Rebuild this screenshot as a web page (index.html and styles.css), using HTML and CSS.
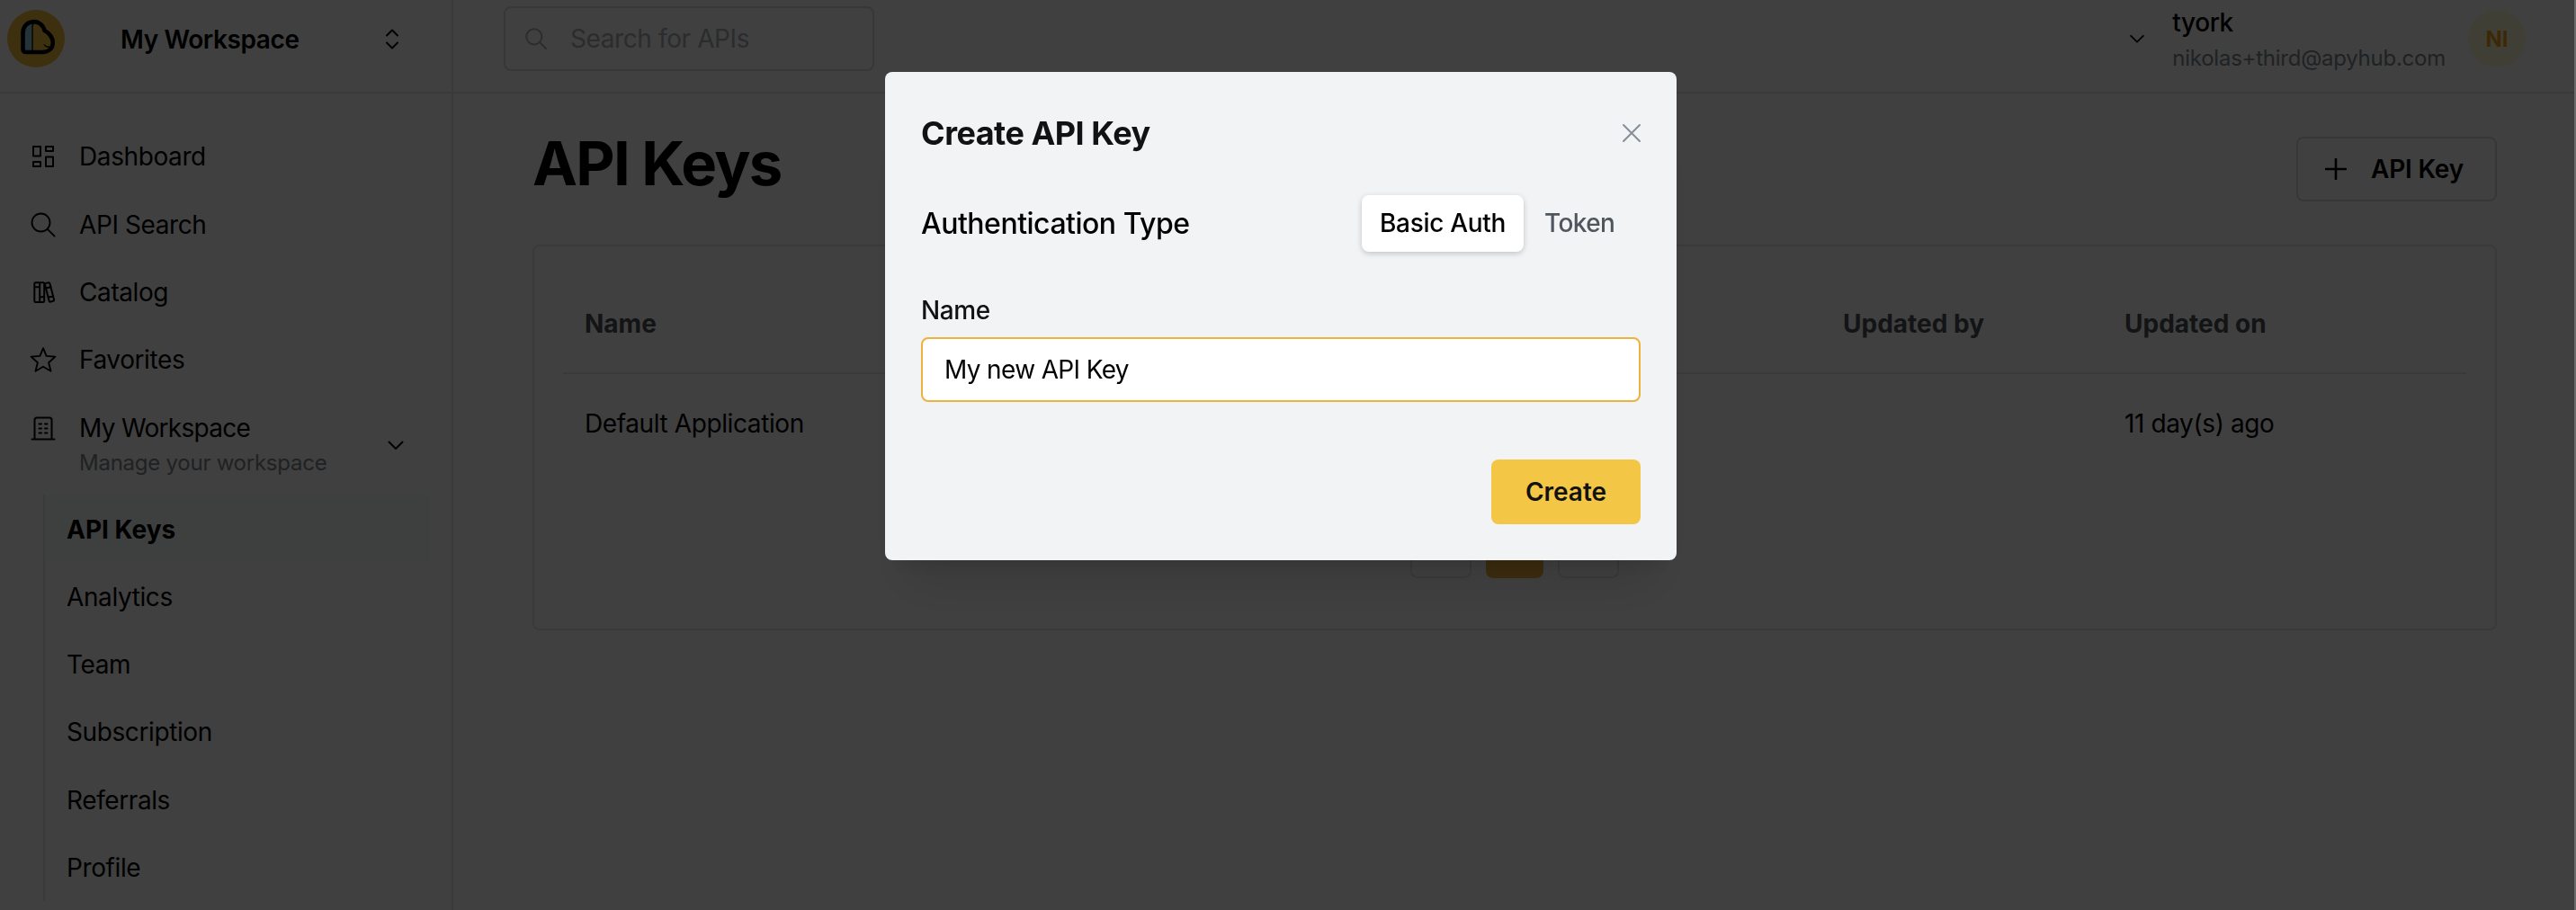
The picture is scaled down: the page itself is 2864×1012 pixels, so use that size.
FILE: index.html
```html
<!DOCTYPE html>
<html lang="en">

<head>
    <meta charset="UTF-8">
    <meta name="viewport" content="width=device-width, initial-scale=1.0">
    <title>API Keys</title>
    <link rel="stylesheet" href="styles.css">
</head>

<body>
    <div class="app">
        <aside class="sidebar">
            <div class="brand">
                <svg class="logo" viewBox="0 0 64 64">
                    <circle cx="32" cy="32" r="32" fill="#f0bf3c" />
                    <path d="M19 16.500 Q22 13.500 28 13.500 V46.500 H19 Z" fill="#8bc9e0" />
                    <path d="M17.500 25.500 C17.500 10.500 38 8.500 41.500 23 C54 29 54.500 46.500 39 47 H21 Q17.500 47 17.500 43.500 Z" fill="none" stroke="#000" stroke-width="4.600" stroke-linejoin="round" />
                    <path d="M28 47 V18 Q28 15.500 31 14 M41 38.500 Q43 42 47 41" fill="none" stroke="#000" stroke-width="1.300" />
                </svg>
                <span class="brand-name">My Workspace</span>
                <svg class="icon selector" viewBox="0 0 24 32"><path d="m6 12.500 6-6 6 6M6 20.500l6 6 6-6" /></svg>
            </div>
            <nav class="menu">
                <a class="menu-item">
                    <svg class="icon" viewBox="0 0 32 32"><path d="M5 5h8v10.500H5zM19 5h8v5h-8zM19 16.500h8V27h-8zM5 22h8v5H5z" /></svg>
                    <span>Dashboard</span>
                </a>
                <a class="menu-item">
                    <svg class="icon thin" viewBox="0 0 32 32"><circle cx="13.500" cy="13.500" r="10" /><path d="m20.600 20.600 8 8" /></svg>
                    <span>API Search</span>
                </a>
                <a class="menu-item">
                    <svg class="icon" viewBox="0 0 32 32"><path d="M7.500 5.300h4.700v21.600H7.500q-1.200 0-1.200-1.200V6.500q0-1.200 1.200-1.200zM12.200 5.300H16q1.200 0 1.200 1.200v19.200q0 1.200-1.200 1.200h-3.800M6.300 10.300h5.900M12.200 21.300h5M17.800 6.400l4-1.100q1.200-.2 1.600 1l4.700 18q.2 1.200-.9 1.500l-3 .8q-1.300.3-1.600-.9zM19 11.500l5.700-1.500M21.300 21.800l5.800-1.500" /></svg>
                    <span>Catalog</span>
                </a>
                <a class="menu-item">
                    <svg class="icon thin" viewBox="0 0 32 32"><path d="m16 3.200 3.600 8.700 9.700.8-7.200 6.500 2.400 9.500-8.500-4.900-8.500 4.900 2.400-9.500-7.200-6.500 9.700-.8z" /></svg>
                    <span>Favorites</span>
                </a>
                <a class="menu-item">
                    <svg class="icon" viewBox="0 0 32 32"><path d="M3.500 28.500h25M6.500 28.500V7q0-2.500 2.500-2.500h14q2.500 0 2.500 2.500v21.500M11.500 11.500h2.500M18 11.500h2.500M11.500 16.500h2.500M18 16.500h2.500M11.500 21.500h2.500M18 21.500h2.500" /></svg>
                    <span class="tight">My Workspace</span>
                </a>
            </nav>
            <div class="workspace-note">
                <span class="muted">Manage your workspace</span>
                <svg class="icon chevron" viewBox="0 0 24 24"><path d="m4.500 8.500 7.500 7.500 7.500-7.500" /></svg>
            </div>
            <nav class="submenu">
                <a class="submenu-item active">API Keys</a>
                <a class="submenu-item">Analytics</a>
                <a class="submenu-item">Team</a>
                <a class="submenu-item">Subscription</a>
                <a class="submenu-item">Referrals</a>
                <a class="submenu-item">Profile</a>
            </nav>
        </aside>

        <div class="page">
            <header class="topbar">
                <div class="search">
                    <svg class="icon" viewBox="0 0 24 24"><circle cx="9.800" cy="9.800" r="8.600" /><path d="m16 16 7 7" /></svg>
                    <span>Search for APIs</span>
                </div>
                <div class="user">
                    <svg class="icon user-chevron" viewBox="0 0 24 24"><path d="m4.500 8.500 7.500 7.500 7.500-7.500" /></svg>
                    <div class="user-info">
                        <span class="user-name">tyork</span>
                        <span class="muted">nikolas+third@apyhub.com</span>
                    </div>
                    <div class="avatar">NI</div>
                </div>
            </header>

            <main class="content">
                <div class="heading">
                    <h1>API Keys</h1>
                    <button class="btn-outline" type="button">
                        <svg class="icon" viewBox="0 0 24 24"><path d="M12 1v22M1 12h22" /></svg>
                        <span>API Key</span>
                    </button>
                </div>
                <section class="card">
                    <div class="row row-head">
                        <span>Name</span>
                        <span>Updated by</span>
                        <span class="col-on">Updated on</span>
                    </div>
                    <div class="row">
                        <span>Default Application</span>
                        <span class="col-on">11 day(s) ago</span>
                    </div>
                    <div class="pagination">
                        <div class="page-btn"></div>
                        <div class="page-btn current"></div>
                        <div class="page-btn"></div>
                    </div>
                </section>
            </main>
        </div>
    </div>

    <div class="overlay">
        <form class="modal">
            <div class="modal-head">
                <h2>Create API Key</h2>
                <svg class="icon close" viewBox="0 0 24 24"><path d="m3 3 18 18M21 3 3 21" /></svg>
            </div>
            <div class="auth">
                <span class="auth-label">Authentication Type</span>
                <div class="segmented">
                    <span class="segment selected">Basic Auth</span>
                    <span class="segment">Token</span>
                </div>
            </div>
            <label for="keyName">Name</label>
            <input type="text" id="keyName" value="My new API Key">
            <button class="btn-create" type="button">Create</button>
        </form>
    </div>
</body>

</html>
```

FILE: styles.css
```css
* {
    margin: 0;
    padding: 0;
    box-sizing: border-box;
}

html {
    background: #6a6a68;
}

body {
    margin-right: 2px;
    background: #fff;
    color: #000;
    font-family: Inter, sans-serif;
    font-size: 28px;
    letter-spacing: -.4px;
    overflow: hidden;
}

.app {
    display: flex;
    height: 1012px;
    background: #fff;
}

.icon {
    width: 32px;
    height: 32px;
    flex-shrink: 0;
    fill: none;
    stroke: currentColor;
    stroke-width: 2;
    stroke-linecap: round;
    stroke-linejoin: round;
}

.icon.thin {
    stroke-width: 1.9;
}

.tight {
    letter-spacing: -.7px;
}

.muted {
    font-size: 24px;
    letter-spacing: -.25px;
    color: #7e868c;
}

/* sidebar */
.sidebar {
    width: 504px;
    flex-shrink: 0;
    border-right: 2px solid #e6e8e8;
}

.brand {
    display: flex;
    align-items: center;
    height: 104px;
    padding: 0 54px 16px 8px;
    border-bottom: 2px solid #e6e8e8;
}

.logo {
    width: 64px;
    height: 64px;
}

.brand-name {
    flex: 1;
    margin-left: 62px;
    padding-top: 2px;
    font-weight: 600;
}

.selector {
    width: 24px;
    height: 32px;
}

.menu {
    padding-top: 32px;
}

.menu-item {
    display: flex;
    align-items: center;
    gap: 24px;
    height: 75.4px;
    padding: 1px 32px 0;
}

.workspace-note {
    display: flex;
    justify-content: space-between;
    height: 37px;
    padding: 0 50px 0 88px;
}

.workspace-note .muted {
    margin-top: -13px;
}

.chevron {
    width: 24px;
    height: 24px;
    margin-top: -30px;
}

.submenu {
    margin: 0 24px 0 48px;
    border-left: 2px solid #e6e8e8;
}

.submenu-item {
    display: flex;
    align-items: center;
    height: 75.3px;
    padding: 2px 0 0 24px;
}

.submenu-item.active {
    background: #f6fffb;
    font-weight: 700;
    letter-spacing: 0;
}

/* top bar */
.page {
    flex: 1;
}

.topbar {
    display: flex;
    justify-content: space-between;
    align-items: center;
    height: 104px;
    padding: 0 54px 16px 56px;
    border-bottom: 2px solid #e6e8e8;
}

.search {
    display: flex;
    align-items: center;
    gap: 26px;
    width: 412px;
    height: 72px;
    padding-left: 22px;
    border: 2px solid #d7dbdf;
    border-radius: 8px;
    color: #a9afb4;
}

.search .icon {
    width: 24px;
    height: 24px;
}

.user {
    display: flex;
    align-items: center;
}

.user-chevron {
    width: 22px;
    height: 22px;
}

.user-info {
    display: flex;
    flex-direction: column;
    gap: 8px;
    margin: 0 25px 0 28px;
}

.user-name {
    font-weight: 500;
}

.avatar {
    display: flex;
    align-items: center;
    justify-content: center;
    width: 64px;
    height: 64px;
    border-radius: 50%;
    background: #fffbd1;
    color: #ef9f1c;
    font-size: 24px;
    font-weight: 700;
    letter-spacing: 0;
}

/* content */
.content {
    padding: 48px 86px 0 88px;
}

.heading {
    display: flex;
    justify-content: space-between;
    height: 120px;
}

h1 {
    margin-top: -4px;
    font-size: 67px;
    line-height: 68px;
    letter-spacing: -1.7px;
}

.btn-outline {
    display: flex;
    align-items: center;
    gap: 27px;
    width: 223px;
    height: 72px;
    padding-left: 30px;
    border: 2px solid #d7dbdf;
    border-radius: 8px;
    background: none;
    font: 600 28px Inter, sans-serif;
    letter-spacing: -.2px;
}

.btn-outline .icon {
    width: 24px;
    height: 24px;
    stroke-width: 2.6;
}

.card {
    height: 429px;
    padding: 32px;
    border: 2px solid #e1e5e8;
    border-radius: 8px;
}

.row {
    display: grid;
    grid-template-columns: 1399px 313px 1fr;
    align-items: center;
    height: 109px;
    padding: 0 24px;
}

.row-head {
    height: 110px;
    border-bottom: 2px solid #e1e5e8;
    color: #4c5155;
    font-weight: 700;
    letter-spacing: 0;
}

.col-on {
    grid-column: 3;
}

.pagination {
    display: flex;
    justify-content: center;
    gap: 16px;
    margin-top: 46px;
}

.page-btn {
    width: 68px;
    height: 72px;
    border: 2px solid #e1e5e8;
    border-radius: 8px;
}

.page-btn.current {
    width: 64px;
    border: none;
    background: #f0b13c;
}

/* modal */
.overlay {
    position: fixed;
    inset: 0 2px 0 0;
    padding-top: 80px;
    background: rgba(0, 0, 0, .75);
}

.modal {
    display: flex;
    flex-direction: column;
    width: 880px;
    height: 543px;
    margin-left: 984px;
    padding: 40px;
    border-radius: 8px;
    background: #f1f3f5;
    box-shadow: 0 50px 50px -20px rgba(0, 0, 0, .1), 0 20px 20px -14px rgba(0, 0, 0, .1);
}

.modal-head {
    display: flex;
    justify-content: space-between;
    align-items: center;
    height: 56px;
}

h2 {
    color: #111213;
    font-size: 36px;
    font-weight: 700;
    letter-spacing: -.5px;
}

.close {
    width: 24px;
    height: 24px;
    margin-right: -2px;
    color: #868e96;
}

.auth {
    display: flex;
    justify-content: space-between;
    align-items: center;
    height: 64px;
    margin-top: 40px;
}

.auth-label {
    font-size: 32px;
    font-weight: 500;
    letter-spacing: -.5px;
}

.segmented {
    display: flex;
}

.segment {
    display: flex;
    align-items: center;
    width: 130px;
    height: 63px;
    padding-left: 23px;
    border-radius: 8px;
    color: #50565e;
    font-weight: 500;
    letter-spacing: -.6px;
}

.segment.selected {
    width: 180px;
    padding-left: 20px;
    background: #fff;
    color: #000;
    letter-spacing: -.3px;
    box-shadow: 0 2px 6px rgba(0, 0, 0, .2);
}

label {
    margin-top: 48px;
    line-height: 34px;
    color: #111213;
    font-weight: 500;
}

input {
    height: 72px;
    margin-top: 13px;
    padding: 0 24px;
    border: 2px solid #edb13e;
    border-radius: 8px;
    background: #fff;
    font: 28px Inter, sans-serif;
    letter-spacing: -.65px;
}

.btn-create {
    align-self: flex-end;
    width: 166px;
    height: 72px;
    margin-top: 64px;
    border: none;
    border-radius: 8px;
    background: #f3c646;
    color: #111213;
    font: 600 28px Inter, sans-serif;
}
```
